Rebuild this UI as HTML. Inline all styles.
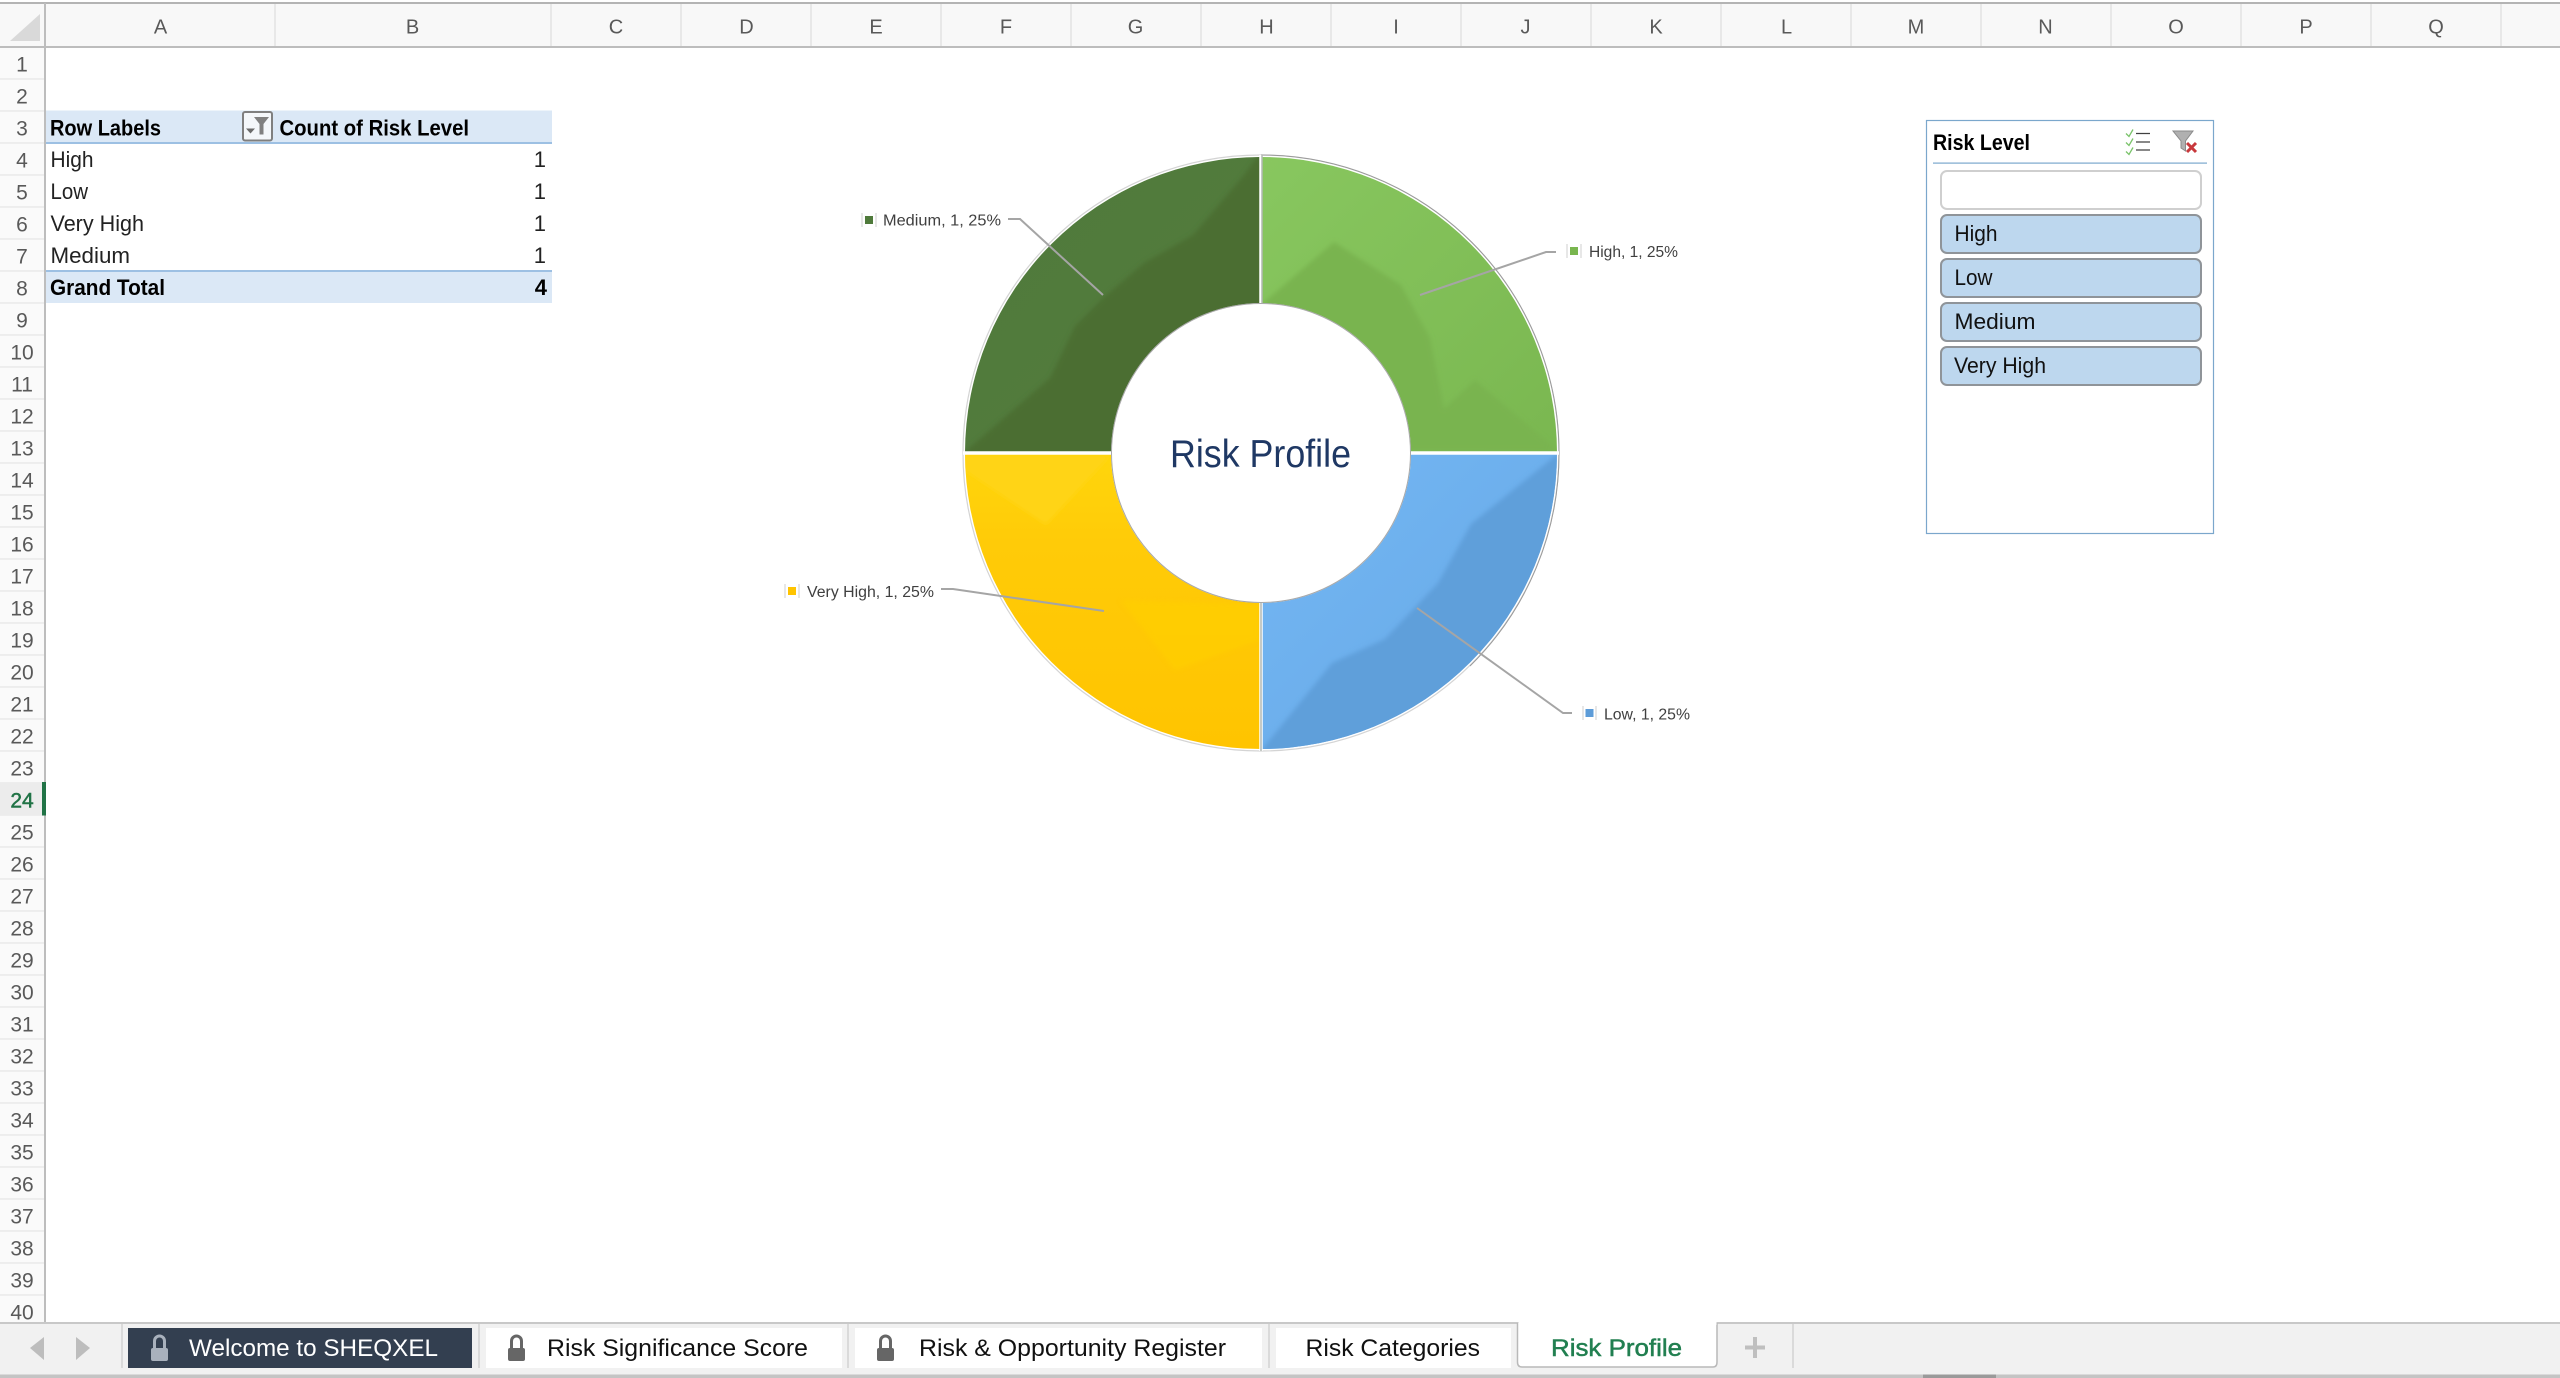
<!DOCTYPE html>
<html lang="en"><head><meta charset="utf-8"><title>Risk Profile</title>
<style>
html,body{margin:0;padding:0;background:#fff;width:2560px;height:1378px;overflow:hidden}
svg{display:block;font-family:"Liberation Sans",sans-serif}
.h{font-size:20px;fill:#595959;text-anchor:middle}
.r{font-size:21px;fill:#595959;text-anchor:middle}
.p{font-size:22px;fill:#222}
.b{font-size:22px;fill:#000;font-weight:bold}
.l{font-size:15.5px;fill:#404040}
.t{font-size:24px;fill:#111}
.s{font-size:22px;fill:#111}
</style></head><body>
<svg width="2560" height="1378" viewBox="0 0 2560 1378" xmlns="http://www.w3.org/2000/svg">
<defs>
<pattern id="rows" x="0" y="47.7" width="44" height="32" patternUnits="userSpaceOnUse">
<rect width="44" height="32" fill="#fafafa"/><rect y="30.6" width="44" height="1.6" fill="#e8e8e8"/>
</pattern>
<filter id="soft" x="-5%" y="-5%" width="110%" height="110%"><feGaussianBlur stdDeviation="2.5"/></filter>
<linearGradient id="gG" x1="0" y1="0" x2="1" y2="1"><stop offset="0" stop-color="#88c75f"/><stop offset="1" stop-color="#7ab750"/></linearGradient>
<linearGradient id="gD" x1="0" y1="0" x2="1" y2="1"><stop offset="0" stop-color="#4f7a3b"/><stop offset="1" stop-color="#547c3e"/></linearGradient>
<linearGradient id="gB" x1="0" y1="0" x2="1" y2="1"><stop offset="0" stop-color="#74b7f4"/><stop offset="1" stop-color="#66a8e5"/></linearGradient>
<linearGradient id="gY" x1="0" y1="0" x2="0" y2="1"><stop offset="0" stop-color="#ffd60c"/><stop offset="0.3" stop-color="#ffcb08"/><stop offset="1" stop-color="#ffc400"/></linearGradient>
<clipPath id="cG"><path d="M1261,157A296,296 0 0 1 1557,453L1411,453A150,150 0 0 0 1261,303Z"/></clipPath>
<clipPath id="cB"><path d="M1557,453A296,296 0 0 1 1261,749L1261,603A150,150 0 0 0 1411,453Z"/></clipPath>
<clipPath id="cY"><path d="M1261,749A296,296 0 0 1 965,453L1111,453A150,150 0 0 0 1261,603Z"/></clipPath>
<clipPath id="cD"><path d="M965,453A296,296 0 0 1 1261,157L1261,303A150,150 0 0 0 1111,453Z"/></clipPath>
</defs>

<rect width="2560" height="1378" fill="#fff"/>

<!-- column header -->
<rect x="0" y="3" width="2560" height="43" fill="#f8f8f8"/>
<rect x="0" y="2" width="2560" height="2" fill="#b4b4b4"/>
<rect x="0" y="46" width="2560" height="2" fill="#bdbdbd"/>
<polygon points="40,14 40,41 10,41" fill="#d9d9d9"/>
<path d="M275,4V46M551,4V46M681,4V46M811,4V46M941,4V46M1071,4V46M1201,4V46M1331,4V46M1461,4V46M1591,4V46M1721,4V46M1851,4V46M1981,4V46M2111,4V46M2241,4V46M2371,4V46M2501,4V46" stroke="#e3e3e3" stroke-width="1.5" fill="none"/>
<g>
<text class="h" x="160.500" y="33.300">A</text><text class="h" x="412.500" y="33.300">B</text><text class="h" x="616" y="33.300">C</text><text class="h" x="746.500" y="33.300">D</text><text class="h" x="876" y="33.300">E</text><text class="h" x="1006" y="33.300">F</text><text class="h" x="1135.500" y="33.300">G</text><text class="h" x="1266.500" y="33.300">H</text><text class="h" x="1396" y="33.300">I</text><text class="h" x="1525.500" y="33.300">J</text><text class="h" x="1656" y="33.300">K</text><text class="h" x="1786.500" y="33.300">L</text><text class="h" x="1916" y="33.300">M</text><text class="h" x="2045.500" y="33.300">N</text><text class="h" x="2176" y="33.300">O</text><text class="h" x="2306" y="33.300">P</text><text class="h" x="2436" y="33.300">Q</text>
</g>

<!-- row header -->
<rect x="0" y="48" width="44" height="1274" fill="url(#rows)"/>
<rect x="0" y="783" width="44" height="32" fill="#ececec"/>
<rect x="44" y="3" width="2" height="1319" fill="#bdbdbd"/>
<rect x="42" y="782" width="4" height="33.500" fill="#217346"/>
<g>
<text class="r" x="22" y="71.500">1</text><text class="r" x="22" y="103.500">2</text><text class="r" x="22" y="135.500">3</text><text class="r" x="22" y="167.500">4</text><text class="r" x="22" y="199.500">5</text><text class="r" x="22" y="231.500">6</text><text class="r" x="22" y="263.500">7</text><text class="r" x="22" y="295.500">8</text><text class="r" x="22" y="327.500">9</text><text class="r" x="22" y="359.500">10</text>
<text class="r" x="22" y="391.500">11</text><text class="r" x="22" y="423.500">12</text><text class="r" x="22" y="455.500">13</text><text class="r" x="22" y="487.500">14</text><text class="r" x="22" y="519.500">15</text><text class="r" x="22" y="551.500">16</text><text class="r" x="22" y="583.500">17</text><text class="r" x="22" y="615.500">18</text><text class="r" x="22" y="647.500">19</text><text class="r" x="22" y="679.500">20</text>
<text class="r" x="22" y="711.500">21</text><text class="r" x="22" y="743.500">22</text><text class="r" x="22" y="775.500">23</text><text class="r" x="22" y="807.500" style="fill:#217346;stroke:#217346;stroke-width:.5">24</text><text class="r" x="22" y="839.500">25</text><text class="r" x="22" y="871.500">26</text><text class="r" x="22" y="903.500">27</text><text class="r" x="22" y="935.500">28</text><text class="r" x="22" y="967.500">29</text><text class="r" x="22" y="999.500">30</text>
<text class="r" x="22" y="1031.500">31</text><text class="r" x="22" y="1063.500">32</text><text class="r" x="22" y="1095.500">33</text><text class="r" x="22" y="1127.500">34</text><text class="r" x="22" y="1159.500">35</text><text class="r" x="22" y="1191.500">36</text><text class="r" x="22" y="1223.500">37</text><text class="r" x="22" y="1255.500">38</text><text class="r" x="22" y="1287.500">39</text><text class="r" x="22" y="1319.500">40</text>
</g>

<!-- pivot -->
<rect x="46" y="110.500" width="506" height="32.500" fill="#dbe8f6"/>
<rect x="46" y="142" width="506" height="2" fill="#9dc0e3"/>
<rect x="46" y="271" width="506" height="32" fill="#dbe8f6"/>
<rect x="46" y="270" width="506" height="2" fill="#9dc0e3"/>
<text class="b" x="50" y="135.700" textLength="111" lengthAdjust="spacingAndGlyphs">Row Labels</text>
<text class="b" x="279.500" y="135.700" textLength="189.500" lengthAdjust="spacingAndGlyphs">Count of Risk Level</text>
<rect x="243" y="112" width="29" height="28.500" rx="2" fill="#f4f7fa" stroke="#7f7f7f" stroke-width="2"/>
<path d="M254,117H269L263.500,124V134.500H259.500V124Z" fill="#808080"/>
<path d="M246,128.500H255L250.500,133.500Z" fill="#6b6b6b"/>
<text class="p" x="50.500" y="167" textLength="43" lengthAdjust="spacingAndGlyphs">High</text>
<text class="p" x="50.500" y="199" textLength="37.500" lengthAdjust="spacingAndGlyphs">Low</text>
<text class="p" x="50.500" y="231" textLength="93.500" lengthAdjust="spacingAndGlyphs">Very High</text>
<text class="p" x="50.500" y="263" textLength="79.500" lengthAdjust="spacingAndGlyphs">Medium</text>
<text class="b" x="50" y="295" textLength="115" lengthAdjust="spacingAndGlyphs">Grand Total</text>
<text class="p" x="546" y="167" text-anchor="end">1</text>
<text class="p" x="546" y="199" text-anchor="end">1</text>
<text class="p" x="546" y="231" text-anchor="end">1</text>
<text class="p" x="546" y="263" text-anchor="end">1</text>
<text class="b" x="547" y="295" text-anchor="end">4</text>

<!-- donut -->
<circle cx="1261" cy="453" r="298" fill="#fff" stroke="#d4d4d4" stroke-width="1.2"/>
<path d="M1261,155A298,298 0 0 1 1559,453A298,298 0 0 1 1470,666" fill="none" stroke="#9a9a9a" stroke-width="1"/>
<g clip-path="url(#cG)">
<rect x="1261" y="155" width="298" height="298" fill="url(#gG)"/>
<polygon points="1262,304 1334,242 1401,285 1430,338 1444,409 1475,380 1558,451 1411,451" fill="#79b450" filter="url(#soft)"/>
</g>
<g clip-path="url(#cD)">
<rect x="963" y="155" width="298" height="298" fill="url(#gD)"/>
<polygon points="1262,150 1262,456 960,456 1050,378 1075,326 1103,298 1144,263 1193,235 1244,175" fill="#4c6e32" filter="url(#soft)"/>
</g>
<g clip-path="url(#cB)">
<rect x="1261" y="453" width="298" height="298" fill="url(#gB)"/>
<polygon points="1560,452 1471,524 1438,583 1385,639 1332,663 1260,752 1560,752" fill="#5f9fda" filter="url(#soft)"/>
</g>
<g clip-path="url(#cY)">
<rect x="963" y="453" width="298" height="298" fill="url(#gY)"/>
<polygon points="964,455 1111,455 1046,525 964,470" fill="#ffd412" filter="url(#soft)"/>
<polygon points="1259,604 1259,640 1175,670 1120,600" fill="#ffcf00" opacity=".7" filter="url(#soft)"/>
</g>
<path d="M1261,155V303M1261,603V751M963,453H1111M1411,453H1559" stroke="#fff" stroke-width="3.500" fill="none"/>
<path d="M1262,155V303M1261,603V751" stroke="#6f7a70" stroke-width=".8" fill="none"/>
<circle cx="1261" cy="453" r="149.500" fill="#fff" stroke="#a8a8a8" stroke-width="1"/>
<text x="1170" y="467" textLength="181" lengthAdjust="spacingAndGlyphs" style="font-size:39px;fill:#1f3864">Risk Profile</text>

<!-- leaders -->
<g fill="none" stroke="#a5a5a5" stroke-width="2">
<path d="M1420,295L1546,252H1556"/>
<path d="M1417,608L1563,713H1572"/>
<path d="M1104,611L953,589H941"/>
<path d="M1103,295L1020,219H1008"/>
</g>
<!-- data labels -->
<g>
<path d="M862,213V227M876,213V227" stroke="#cfcfcf" stroke-width="1" fill="none"/><rect x="865" y="216" width="8" height="8" fill="#4f7a3b"/>
<text class="l" x="883" y="225.500" textLength="118" lengthAdjust="spacingAndGlyphs">Medium, 1, 25%</text>
<path d="M785,584V598M799,584V598" stroke="#cfcfcf" stroke-width="1" fill="none"/><rect x="788" y="587" width="8" height="8" fill="#ffc400"/>
<text class="l" x="807" y="597" textLength="127" lengthAdjust="spacingAndGlyphs">Very High, 1, 25%</text>
<path d="M1567,244V258M1581,244V258" stroke="#cfcfcf" stroke-width="1" fill="none"/><rect x="1570" y="247" width="8" height="8" fill="#79b64f"/>
<text class="l" x="1589" y="257" textLength="89" lengthAdjust="spacingAndGlyphs">High, 1, 25%</text>
<path d="M1583,706V720M1596,706V720" stroke="#cfcfcf" stroke-width="1" fill="none"/><rect x="1585.500" y="709" width="8" height="8" fill="#5d9cd8"/>
<text class="l" x="1604" y="719.500" textLength="86" lengthAdjust="spacingAndGlyphs">Low, 1, 25%</text>
</g>

<!-- slicer -->
<rect x="1926.500" y="120.500" width="287" height="413" fill="#fff" stroke="#7ba7cc" stroke-width="1.200"/>
<text class="b" x="1933" y="150" textLength="97" lengthAdjust="spacingAndGlyphs">Risk Level</text>
<rect x="1933" y="162.500" width="274" height="1.200" fill="#7ba7cc"/>
<path d="M2126,135L2129,138L2133,131M2126,144L2129,147L2133,140M2126,153L2129,156L2133,149" fill="none" stroke="#7ac36a" stroke-width="1.300" transform="translate(0,-1.500)"/>
<path d="M2136,133.500H2150M2136,142H2150M2136,150H2150" fill="none" stroke="#404040" stroke-width="1.200"/>
<path d="M2173,131H2193L2185.500,141V151L2181,148V141Z" fill="#b0b0b0" stroke="#8a8a8a" stroke-width="1"/>
<path d="M2187,143L2196,152M2196,143L2187,152" fill="none" stroke="#c8383c" stroke-width="3"/>
<rect x="1941" y="171" width="260" height="38" rx="6" fill="#fff" stroke="#cfcfcf" stroke-width="2"/>
<rect x="1941" y="215" width="260" height="38" rx="6" fill="#bdd7ee" stroke="#8f9499" stroke-width="2"/>
<rect x="1941" y="259" width="260" height="38" rx="6" fill="#bdd7ee" stroke="#8f9499" stroke-width="2"/>
<rect x="1941" y="303" width="260" height="38" rx="6" fill="#bdd7ee" stroke="#8f9499" stroke-width="2"/>
<rect x="1941" y="347" width="260" height="38" rx="6" fill="#bdd7ee" stroke="#8f9499" stroke-width="2"/>
<text class="s" x="1954.500" y="241" textLength="43" lengthAdjust="spacingAndGlyphs">High</text>
<text class="s" x="1954.500" y="285" textLength="38" lengthAdjust="spacingAndGlyphs">Low</text>
<text class="s" x="1954.500" y="329" textLength="81" lengthAdjust="spacingAndGlyphs">Medium</text>
<text class="s" x="1954" y="373" textLength="92" lengthAdjust="spacingAndGlyphs">Very High</text>

<!-- tab bar -->
<rect x="0" y="1322" width="2560" height="53" fill="#f1f1f1"/>
<rect x="0" y="1322" width="2560" height="2" fill="#c8c8c8"/>
<rect x="0" y="1374.500" width="2560" height="3.500" fill="#c4c4c4"/>
<rect x="1923" y="1374.500" width="73" height="3.500" fill="#9a9a9a"/>
<polygon points="44,1337 30,1348 44,1360" fill="#bdbdbd"/>
<polygon points="76,1337 90,1348 76,1360" fill="#bdbdbd"/>
<path d="M122,1324V1368M479,1324V1368M848,1324V1368M1269,1324V1368M1793,1324V1368" stroke="#d2d2d2" stroke-width="1.500"/>
<rect x="128" y="1328" width="344" height="40" fill="#333f50"/>
<rect x="486" y="1328" width="356" height="40" fill="#fff"/>
<rect x="855" y="1328" width="407" height="40" fill="#fff"/>
<rect x="1276" y="1328" width="235" height="40" fill="#fff"/>
<path d="M1517.500,1323V1362Q1517.500,1367 1522,1367H1713Q1717,1367 1717,1362V1323" fill="#fff" stroke="#b9b9b9" stroke-width="1.500"/>
<rect x="1518.500" y="1321" width="198" height="4" fill="#fff"/>
<!-- locks -->
<g fill="#a9b1bd"><rect x="151" y="1348" width="17" height="13" rx="2"/><path d="M153,1349V1341a6,6 0 0 1 13,0V1349H163V1341a3.500,3.500 0 0 0 -7,0V1349Z"/></g>
<g fill="#666"><rect x="508" y="1348" width="17" height="13" rx="2"/><path d="M510,1349V1341a6,6 0 0 1 13,0V1349H520V1341a3.500,3.500 0 0 0 -7,0V1349Z"/></g>
<g fill="#666"><rect x="877" y="1348" width="17" height="13" rx="2"/><path d="M879,1349V1341a6,6 0 0 1 13,0V1349H889V1341a3.500,3.500 0 0 0 -7,0V1349Z"/></g>
<text class="t" x="189" y="1356" textLength="249" lengthAdjust="spacingAndGlyphs" style="fill:#fff">Welcome to SHEQXEL</text>
<text class="t" x="547" y="1356" textLength="261" lengthAdjust="spacingAndGlyphs">Risk Significance Score</text>
<text class="t" x="919" y="1356" textLength="307" lengthAdjust="spacingAndGlyphs">Risk &amp; Opportunity Register</text>
<text class="t" x="1305.500" y="1356" textLength="174.500" lengthAdjust="spacingAndGlyphs">Risk Categories</text>
<text class="t" x="1551" y="1356" textLength="131" lengthAdjust="spacingAndGlyphs" style="fill:#217f50;stroke:#217f50;stroke-width:.5">Risk Profile</text>
<path d="M1755,1337V1358M1745,1347.500H1765" stroke="#bfbfbf" stroke-width="4" fill="none"/>
</svg>
</body></html>
